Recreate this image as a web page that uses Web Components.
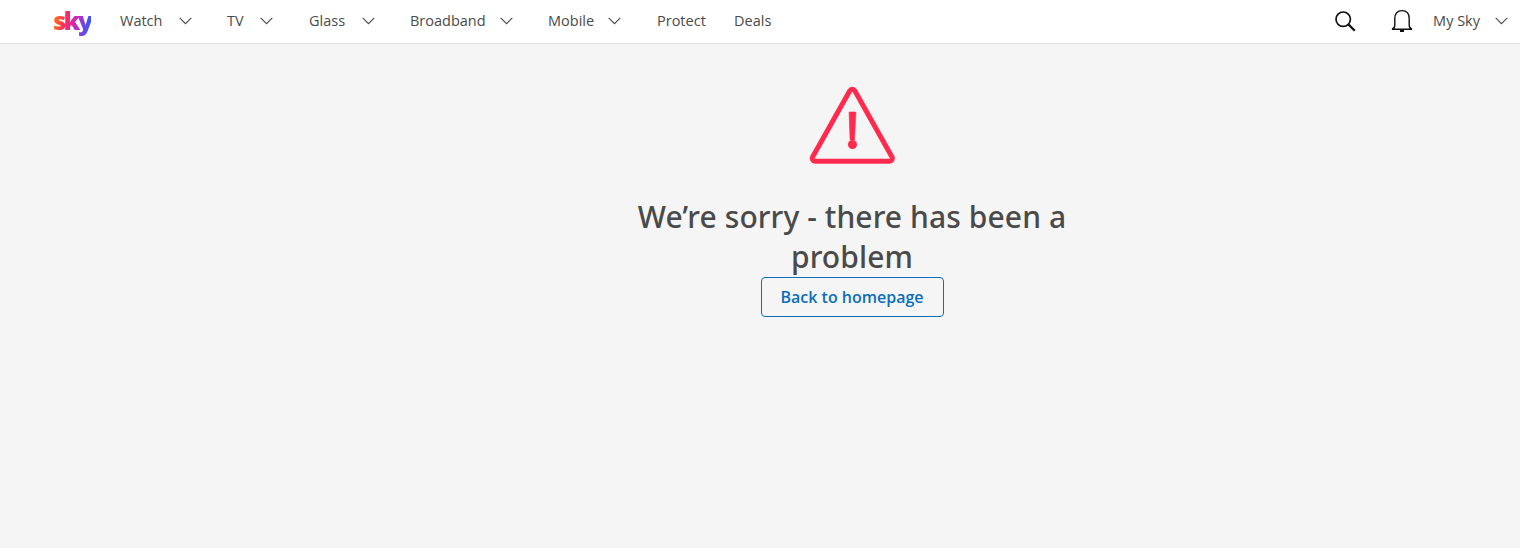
<!DOCTYPE html>
<html lang="en">
<head>
<meta charset="utf-8">
<title>Sky</title>
<style>
  html, body { margin: 0; height: 100%; background: #f5f5f5; font-family: "Open Sans", "Noto Sans", sans-serif; }
  body { display: flex; flex-direction: column; height: 548px; overflow: hidden; }
</style>
</head>
<body>
<sky-navbar>
  <nav-item label="Watch" style="width:107px"></nav-item>
  <nav-item label="TV" style="width:82px"></nav-item>
  <nav-item label="Glass" style="width:101px"></nav-item>
  <nav-item label="Broadband" style="width:138px; --gap:14.5px"></nav-item>
  <nav-item label="Mobile" style="width:109px; --gap:13.5px"></nav-item>
  <nav-item label="Protect" plain style="width:77px"></nav-item>
  <nav-item label="Deals" plain></nav-item>
</sky-navbar>
<error-panel heading="We’re sorry - there has been a problem" action="Back to homepage"></error-panel>

<script>
const chevron = `<svg width="13" height="8" viewBox="0 0 13 8" fill="none" stroke="#4a4a4a" stroke-width="1.1"><path d="M.7.9 6.5 6.7 12.3.9"/></svg>`;

class SkyNavbar extends HTMLElement {
  constructor() {
    super();
    this.attachShadow({ mode: 'open' });
  }

  connectedCallback() {
    this.shadowRoot.innerHTML = `
      <style>
        :host {
          display: flex;
          align-items: center;
          flex: none;
          box-sizing: content-box;
          height: 41px;
          padding-bottom: 2px;
          background: #fff;
          border-bottom: 1px solid #e2e2e2;
          color: #4a4a4a;
          font-size: 14.5px;
        }
        #logo {
          width: 67px;
          height: 41px;
          margin-left: 53px;
          font: 800 25.5px/41px "Open Sans", sans-serif;
          letter-spacing: -2.6px;
        }
        #logo span {
          background: linear-gradient(100deg, #ff8a00 0%, #ff2b5e 35%, #c22bc8 62%, #2b5bff 95%);
          -webkit-background-clip: text;
          background-clip: text;
          color: transparent;
        }
        #links { display: flex; align-items: center; flex: 1; }
        #tools { display: flex; align-items: center; margin-right: 12px; }
        #search { display: block; margin-right: 35px; }
        #bell { display: block; margin-right: 20px; }
        #account { display: flex; align-items: center; gap: 15px; }
      </style>
      <div id="logo"><span>sky</span></div>
      <div id="links"><slot></slot></div>
      <div id="tools">
        <svg id="search" width="22" height="22" viewBox="0 0 22 22" fill="none" stroke="#111" stroke-width="1.7"><circle cx="9.2" cy="9.2" r="7.2"/><path d="m14.4 14.4 6.4 6.4" stroke-width="2.2"/></svg>
        <svg id="bell" width="22" height="24" viewBox="0 0 22 24" fill="none" stroke="#111" stroke-width="1.4"><path d="M1 20.2c1.6-.6 2.8-1.6 2.8-4V9.5C3.8 4.8 6.4 1.6 11 1.6s7.2 3.2 7.2 7.9v6.7c0 2.4 1.2 3.4 2.8 4z"/><path d="M9 22h4" stroke-width="2"/></svg>
        <div id="account"><span>My Sky</span>${chevron}</div>
      </div>
    `;
  }
}

class NavItem extends HTMLElement {
  constructor() {
    super();
    this.attachShadow({ mode: 'open' });
  }

  connectedCallback() {
    const arrow = this.hasAttribute('plain') ? '' : chevron;
    this.shadowRoot.innerHTML = `
      <style>
        :host { display: flex; align-items: center; gap: var(--gap, 16.5px); color: #4a4a4a; }
      </style>
      <span>${this.getAttribute('label')}</span>${arrow}
    `;
  }
}

class ErrorPanel extends HTMLElement {
  constructor() {
    super();
    this.attachShadow({ mode: 'open' });
  }

  connectedCallback() {
    this.shadowRoot.innerHTML = `
      <style>
        :host {
          display: flex;
          flex-direction: column;
          align-items: center;
          flex: 1;
          padding: 42px 0 0 184px;
          text-align: center;
        }
        svg { display: block; }
        h1 {
          width: 450px;
          margin: 31px 0 0;
          font: 500 30px/40px "Noto Sans", "Open Sans", sans-serif;
          letter-spacing: .1px;
          color: #4a4a4a;
        }
        a {
          display: block;
          box-sizing: border-box;
          width: 183px;
          height: 40px;
          border: 1px solid #0b6fba;
          border-radius: 4px;
          color: #0b6fba;
          font: 600 16px/38px "Open Sans", sans-serif;
          text-decoration: none;
        }
      </style>
      <svg width="88" height="80" viewBox="0 0 88 80" fill="none">
        <path d="M41.8 4.8a2.9 2.9 0 0 1 5 0L84 70.9a2.9 2.9 0 0 1-2.5 4.4H7.1a2.9 2.9 0 0 1-2.5-4.4Z" stroke="#ff2a4e" stroke-width="5"/>
        <path d="M41.5 26h6l.4.6-1.4 27.4h-4.4l-1-27.4z" fill="#ff2a4e" stroke="#ff2a4e" stroke-width=".6" stroke-linejoin="round"/>
        <circle cx="44.5" cy="58.5" r="4.5" fill="#ff2a4e"/>
      </svg>
      <h1>${this.getAttribute('heading')}</h1>
      <a href="#">${this.getAttribute('action')}</a>
    `;
  }
}

customElements.define('sky-navbar', SkyNavbar);
customElements.define('nav-item', NavItem);
customElements.define('error-panel', ErrorPanel);
</script>
</body>
</html>
